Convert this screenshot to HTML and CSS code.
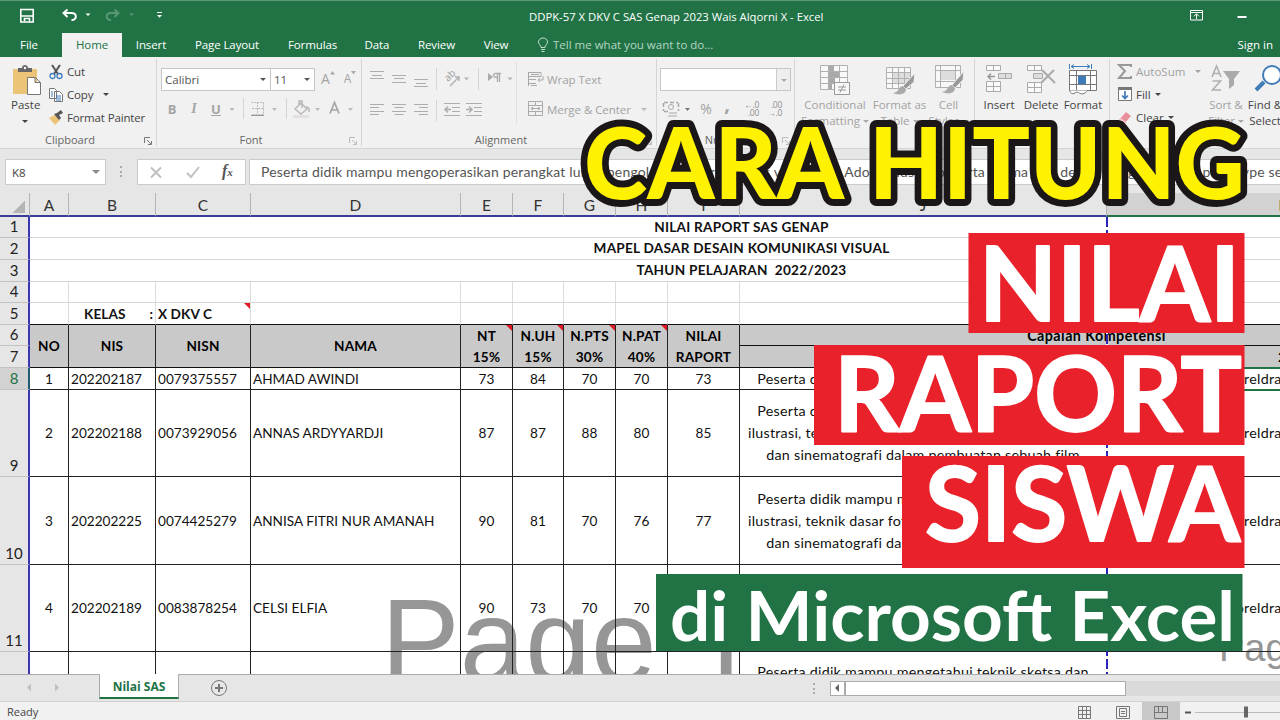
FILE: index.html
```html
<!DOCTYPE html>
<html lang="id">
<head>
    <meta charset="UTF-8">
    <meta name="viewport" content="width=device-width, initial-scale=1.0">
    <title>Cara Hitung Nilai Raport Siswa di Microsoft Excel</title>
    <link rel="stylesheet" href="styles.css">
</head>
<body>
<div class="excel">

    <!-- title bar -->
    <div class="titlebar">
        <svg class="quick" width="180" height="33" fill="none" stroke="#fff">
            <path d="M20.800 8.500h12.400v12.500H20.800z" stroke-width="1.600"/>
            <path d="M21 15h12M24.500 20.500v-3h5v3" stroke-width="1.600"/>
            <path d="M67.500 8.500 63.500 12l4 4M64 12h7.500c6 0 5.500 7 0 7" stroke-width="2"/>
            <path d="M85.500 12.500h5l-2.500 2.500z" fill="#fff" stroke="none"/>
            <g opacity=".25"><path d="m114.500 8.500 4 3.500-4 4M118 12h-7c-6 0-5.500 7 0 7" stroke-width="2"/>
            <path d="M129 12.500h5l-2.500 2.500z" fill="#fff" stroke="none"/></g>
            <path d="M157 11.500h5"/><path d="M157 14h5l-2.500 2.800z" fill="#fff" stroke="none"/>
        </svg>
        <span class="doc-title">DDPK-57 X DKV C SAS Genap 2023 Wais Alqorni X - Excel</span>
        <svg class="window-buttons" width="100" height="33" fill="none" stroke="#fff">
            <path d="M10.500 9.500h12v9.500h-12zM10.500 11.500h12M16.500 18v-5M14 15.300l2.500-2.500 2.500 2.500"/>
            <path d="M57.500 16h9" stroke-width="2"/>
        </svg>
    </div>

    <!-- menu tabs -->
    <div class="tabs">
        <span class="tab file">File</span>
        <span class="tab active">Home</span>
        <span class="tab insert">Insert</span>
        <span class="tab layout">Page Layout</span>
        <span class="tab formulas">Formulas</span>
        <span class="tab data">Data</span>
        <span class="tab review">Review</span>
        <span class="tab view">View</span>
        <svg class="bulb" width="12" height="16" fill="none" stroke="#c2ddcd"><path d="M4 10.500C4 8 1.500 7.500 1.500 5a4.500 4 0 0 1 9 0c0 2.500-2.500 3-2.500 5.500zM4 12.500h4M4.500 14.500h3"/></svg>
        <span class="tell">Tell me what you want to do...</span>
        <span class="signin">Sign in</span>
    </div>

    <!-- ribbon -->
    <div class="ribbon">
        <div class="group clipboard">
            <div class="tools">
                <div class="paste">
                    <svg width="30" height="31"><path d="M1 4h24v25H1z" fill="#ecc477"/><path d="M6 3h4c0-4 6-4 6 0h4v4H6z" fill="#666"/><circle cx="13" cy="3" r="1.200" fill="#fff"/><path d="M15.500 12.500h8l5 5v12h-13zM23 12.500v5h5.500" fill="#fff" stroke="#777"/></svg>
                    <span>Paste</span>
                    <i class="arrow"></i>
                </div>
                <div class="clip-list">
                    <div><svg width="16" height="16" fill="none"><path d="M4 1l6 9M12 1l-6 9" stroke="#555" stroke-width="2"/><circle cx="4.500" cy="12" r="2.500" stroke="#3f7cb8" stroke-width="1.300"/><circle cx="11.500" cy="12" r="2.500" stroke="#3f7cb8" stroke-width="1.300"/></svg><span>Cut</span></div>
                    <div><svg width="16" height="16" fill="#fff" stroke="#777"><path d="M1.500 1.500h5l2 2v8h-7zM6.500 4.500h5l3 3v7h-8z"/><path d="M3 5h2M3 7h2M3 9h2M8 9h5M8 11h5M8 13h5" stroke="#3f7cb8"/></svg><span>Copy</span><i class="arrow"></i></div>
                    <div><svg width="16" height="16"><path d="M1 8l6-3 5 5-5 5z" fill="#ecc477"/><path d="M6 4l5 6 2-2-2-3 4-2-2-3-4 3z" fill="#555"/></svg><span>Format Painter</span></div>
                </div>
            </div>
            <div class="group-name">Clipboard</div>
            <svg class="launch" width="8" height="8" fill="none" stroke="#777"><path d="M.5 6V.5H6M3 3l4 4M7.500 4v3.500H4"/></svg>
        </div>

        <div class="group font">
            <div class="font-row">
                <div class="select name">Calibri<i class="arrow"></i></div>
                <div class="select size">11<i class="arrow"></i></div>
                <span class="grow">A<svg width="5" height="4"><path d="M0 3.500 2.500 0 5 3.500z" fill="#aaa"/></svg></span>
                <span class="shrink">A<svg width="5" height="4"><path d="M0 0h5L2.500 3.500z" fill="#aaa"/></svg></span>
            </div>
            <div class="style-row">
                <b>B</b><em>I</em><u>U</u>
                <svg width="130" height="22" fill="none" stroke="#b9b9b9">
                    <path d="M3.500 10h5L6 13z" fill="#b9b9b9" stroke="none"/>
                    <path d="M17.500 0v21M60.500 0v21" stroke="#d4d4d4"/>
                    <path d="M25.500 4.500h12v12h-12M31.500 4v12M26 10.500h12" stroke-dasharray="2 1"/><path d="M25 17.500h13" stroke="#999"/>
                    <path d="M46 10h5l-2.500 3zM89 10h5l-2.500 3zM122 10h5l-2.500 3z" fill="#b9b9b9" stroke="none"/>
                    <path d="m69 11 6-6 6 6-6 5zM73 7V3h3v7M80 9c4 0 3 3 3 5" stroke-width="1.500"/>
                    <path d="M67 17h16v3H67z" fill="#e3dfe3" stroke="none"/>
                    <path d="m104 15.500 4.500-11 4.500 11M105.500 12h6" stroke="#a5a5a5" stroke-width="1.700"/>
                </svg>
            </div>
            <div class="group-name">Font</div>
            <svg class="launch" width="8" height="8" fill="none" stroke="#bbb"><path d="M.5 6V.5H6M3 3l4 4M7.500 4v3.500H4"/></svg>
        </div>

        <div class="group alignment">
            <div class="tools">
                <svg class="align-icons" width="154" height="68" fill="none" stroke="#adadad">
                    <path d="M8 12.500h14M10 16.500h10M8 19.500h14M30 16.500h14M32 19.500h10M30 23.500h14M52 20.500h14M54 24.500h10M52 27.500h14"/>
                    <path d="M8 45.500h14M8 48.500h9M8 52.500h14M8 55.500h9M30 45.500h14M32.500 48.500h9M30 52.500h14M32.500 55.500h9M52 45.500h14M57 48.500h9M52 52.500h14M57 55.500h9"/>
                    <path d="M74.500 9v22M116.500 9v22M74.500 41v21" stroke="#d5d5d5"/>
                    <text transform="translate(86 23) rotate(-45)" class="ab">ab</text>
                    <path d="m88 27 9-9M93 18h4v4" stroke-width="1.400"/>
                    <path d="M102 18.500h5l-2.500 3zM145.500 18.500h5l-2.500 3z" fill="#b5b5b5" stroke="none"/>
                    <path d="m126 14 5 4-5 4z" fill="#aaa" stroke="none"/><path d="M135.500 23v-8.500M137.500 23v-8.500M139 14.500h-5c-4 0-3 4 1 4" stroke-width="1.300"/>
                    <path d="M82 44.500h16M90 48.500h8M90 52.500h8M82 56.500h16M104 44.500h16M112 48.500h8M112 52.500h8M104 56.500h16"/>
                    <path d="M89 50.500h-6M86 47.500l-3 3 3 3M104 50.500h6M107 47.500l3 3-3 3" stroke-width="1.500"/>
                </svg>
                <div class="wrap-list">
                    <div><svg width="16" height="16" fill="none" stroke="#aaa"><path d="M.5 1v14M1 1.500h12v4H1M3 3.500h8M1 8.500h7M1 12.500h7M3 14.500h6M15 5v4h-5M12 7l-2 2 2 2"/></svg><span>Wrap Text</span></div>
                    <div><svg width="16" height="16" fill="none" stroke="#aaa"><path d="M.5.5h14v14H.5zM.5 4.500h14M.5 10.500h14M7.500.500v4M7.500 10.500v4M3 7.500h9M5 6 3 7.500 5 9M10 6l2 1.500L10 9"/></svg><span>Merge &amp; Center</span><i class="arrow"></i></div>
                </div>
            </div>
            <div class="group-name">Alignment</div>
            <svg class="launch" width="8" height="8" fill="none" stroke="#bbb"><path d="M.5 6V.5H6M3 3l4 4M7.500 4v3.500H4"/></svg>
        </div>

        <div class="group number">
            <div class="select format"><span><i class="arrow"></i></span></div>
            <div class="number-row">
                <svg width="34" height="22" fill="none" stroke="#aaa"><path d="M4 4.500h14M4 13.500h5M3.500 5v8M18.500 5v8" stroke-dasharray="4 2" stroke-width="1.600"/><circle cx="11" cy="9" r="2.500"/><path d="M9 15h8M8 18h9" stroke="#ccc" stroke-width="2"/><path d="M25 10h5l-2.500 3z" fill="#777" stroke="none"/></svg>
                <span class="percent">%</span><span class="comma">,</span>
                <span class="decimal">←.0<br>.00</span><span class="decimal">.00<br>→.0</span>
            </div>
            <div class="group-name">Number</div>
            <svg class="launch" width="8" height="8" fill="none" stroke="#bbb"><path d="M.5 6V.5H6M3 3l4 4M7.500 4v3.500H4"/></svg>
        </div>

        <div class="group styles">
            <div class="big cond">
                <svg width="32" height="32" fill="#f8f8f8" stroke="#b0b0b0"><path d="M1.500 1.500h27v24h-27zM1.500 7.500h27M1.500 13.500h27M1.500 19.500h27M9.500 1.500v24M20.500 1.500v24"/><path d="M10 2h5v5h-5zM10 8h10v5H10zM10 14h6v5h-6zM10 20h3v5h-3z" fill="#a9a9a9" stroke="none"/><path d="M15.500 18.500h15v12h-15zM19 23h8M19 26h8M25 20.500l-4 8" stroke="#999"/></svg>
                <span>Conditional<br>Formatting <i class="arrow"></i></span>
            </div>
            <div class="big table">
                <svg width="32" height="32" fill="#f8f8f8" stroke="#b0b0b0"><path d="M2.500 3.500h24v21h-24z"/><path d="M8 9h18v10H8z" fill="#ddd" stroke="none"/><path d="M2.500 8.500h24M2.500 14.500h24M2.500 19.500h24M8.500 3.500v21M14.500 3.500v21M20.500 3.500v21"/><path d="m31 9-1 9-8 7-3-3z" fill="#999" stroke="#f1f1f1"/><path d="M19 22c-5 0-3 6-10 7 7 3 13 1 13-4z" fill="#aaa" stroke="none"/></svg>
                <span>Format as<br>Table <i class="arrow"></i></span>
            </div>
            <div class="big cell">
                <svg width="32" height="32" fill="#f8f8f8" stroke="#b0b0b0"><path d="M2.500 1.500h25v22h-25z"/><path d="M8 7h14v9H8z" fill="#ddd" stroke="none"/><path d="M2.500 6.500h25M2.500 17.500h25M7.500 1.500v22M22.500 1.500v22"/><path d="m31 7-1 9-8 8-3-3z" fill="#999" stroke="#f1f1f1"/><path d="M19 21c-5 0-3 6-10 7 7 3 13 1 13-4z" fill="#aaa" stroke="none"/></svg>
                <span>Cell<br>Styles <i class="arrow"></i></span>
            </div>
        </div>

        <div class="group cells">
            <div class="big dark">
                <svg width="30" height="32" fill="#fafafa" stroke="#aaa"><path d="M2.500 1.500h14v5h-14zM9.500 1.500v5M2.500 17.500h14v10h-14zM2.500 22.500h14M9.500 17.500v10"/><path d="M14.500 9.500h13v5h-13zM21.500 9.500v5" fill="#ddd"/><path d="M11 12.500H4M7 9.500l-3 3 3 3" fill="none" stroke="#999" stroke-width="1.500"/></svg>
                <span>Insert<br><i class="arrow"></i></span>
            </div>
            <div class="big dark">
                <svg width="30" height="32" fill="#fafafa" stroke="#aaa"><path d="M1.500 1.500h14v5h-14zM8.500 1.500v5M1.500 18.500h14v10h-14zM1.500 23.500h14M8.500 18.500v10"/><path d="M7.500 9.500h9v5h-9z" fill="#ddd"/><path d="m16 6 13 13M28 6 15 19" fill="none" stroke-width="2"/></svg>
                <span>Delete<br><i class="arrow"></i></span>
            </div>
            <div class="big dark">
                <svg width="30" height="32" fill="#fff" stroke="#777"><path d="M1.500 6.500h27v20h-27zM1.500 11.500h27M1.500 20.500h27M8.500 6.500v20M22.500 6.500v20"/><path d="M10 12h8v8h-8z" fill="#3f7cb8" stroke="none"/><path d="M1.500 26.500c3 7 6 0 9 2s6 2 9-2"/><path d="M1.500 0v5M23.500 0v5M4 2.500h17M6 .5l-3 2 3 2M19 .5l3 2-3 2" stroke="#3f7cb8" fill="none"/></svg>
                <span>Format<br><i class="arrow"></i></span>
            </div>
        </div>

        <div class="group editing">
            <div class="edit-list">
                <div class="dim"><svg width="18" height="17" fill="none" stroke="#999" stroke-width="2"><path d="M15 4V2H3l6 6-6 7h12v-2"/></svg><span class="autosum">AutoSum</span><i class="arrow"></i></div>
                <div><svg width="18" height="17" fill="#fff" stroke="#777"><path d="M2.500 1.500h13v13h-13z"/><path d="M2 1h14v3H2z" fill="#777" stroke="none"/><path d="M9 5v7M6 9.500l3 3 3-3" fill="none" stroke="#3f7cb8" stroke-width="1.700"/></svg><span>Fill</span><i class="arrow"></i></div>
                <div><svg width="18" height="17"><path d="m2 12 8-9 5 4-7 8H4z" fill="#e8909c"/><path d="m2 12 3-3 5 4-2 2H4z" fill="#f5c5cc"/></svg><span>Clear</span><i class="arrow"></i></div>
            </div>
            <div class="big sort">
                <svg width="32" height="32" fill="none" stroke="#b0b0b0" stroke-width="1.600"><path d="m2 13 4.500-11L11 13M3.500 9.500h6M2.500 17h8l-8 9h8.500"/><path d="M13 7h17l-6 8v6l-5 4V15z" fill="#aaa" stroke="none"/></svg>
                <span>Sort &amp;<br>Filter <i class="arrow"></i></span>
            </div>
            <div class="big find dark">
                <svg width="32" height="32" fill="#fff" stroke="#3f7cb8"><path d="M11 18 3 26" stroke-width="4"/><circle cx="19" cy="11" r="9" stroke-width="2"/></svg>
                <span>Find &amp;<br>Select</span>
            </div>
            <div class="group-name">Editing</div>
        </div>
    </div>

    <!-- formula bar -->
    <div class="formula-bar">
        <div class="name-box">K8<i class="arrow"></i></div>
        <div class="dots"></div>
        <div class="fx-box">
            <svg width="107" height="24" fill="none" stroke="#c0c0c0" stroke-width="2"><path d="m13 7.500 10 10M23 7.500l-10 10M49 13l4 4 8-10"/></svg>
            <span class="fx">f<small>x</small></span>
        </div>
        <div class="formula">Peserta didik mampu mengoperasikan perangkat lunak pengolah gambar berbasis vektor dan Adobe Illustrator serta skema tata desain dengan produk prototype sebuah karya</div>
    </div>

    <!-- worksheet -->
    <div class="sheet">
        <span class="watermark page1">Page <span>1</span></span>
        <span class="watermark page2">Page 2</span>
        <div class="grid">
            <div class="head corner"></div>
            <div class="head">A</div><div class="head">B</div><div class="head">C</div><div class="head">D</div>
            <div class="head">E</div><div class="head">F</div><div class="head">G</div><div class="head">H</div>
            <div class="head">I</div><div class="head">J</div><div class="head selected">K</div>

            <div class="num">1</div><div class="title">NILAI RAPORT SAS GENAP</div>
            <div class="num">2</div><div class="title">MAPEL DASAR DESAIN KOMUNIKASI VISUAL</div>
            <div class="num">3</div><div class="title">TAHUN PELAJARAN &nbsp;2022/2023</div>

            <div class="num">4</div><div></div><div></div><div></div><div></div><div></div><div></div><div></div><div></div><div></div><div></div><div></div>

            <div class="num">5</div><div class="above"></div><div class="above kelas"><span>KELAS</span><span>:</span></div>
            <div class="above kode note">X DKV C</div><div class="above"></div><div class="above"></div><div class="above"></div>
            <div class="above"></div><div class="above"></div><div class="above"></div><div class="above"></div><div class="above"></div>

            <div class="num row6">6</div><div class="num row7">7</div>
            <div class="th">NO</div><div class="th">NIS</div><div class="th">NISN</div><div class="th">NAMA</div>
            <div class="th note">NT<br>15%</div><div class="th note">N.UH<br>15%</div><div class="th note">N.PTS<br>30%</div><div class="th note">N.PAT<br>40%</div>
            <div class="th">NILAI<br>RAPORT</div>
            <div class="th capaian">Capaian Kompetensi</div>
            <div class="th kd1">1</div><div class="th kd2">2</div>

            <div class="num current">8</div><div class="td">1</div><div class="td left">202202187</div><div class="td left">0079375557</div><div class="td left">AHMAD AWINDI</div>
            <div class="td">73</div><div class="td">84</div><div class="td">70</div><div class="td">70</div><div class="td">73</div>
            <div class="td desc">Peserta didik mampu mengetahui teknik sketsa dan</div><div class="td desc corel picked">mampu mengoperasikan Coreldraw</div>

            <div class="num">9</div><div class="td">2</div><div class="td left">202202188</div><div class="td left">0073929056</div><div class="td left">ANNAS ARDYYARDJI</div>
            <div class="td">87</div><div class="td">87</div><div class="td">88</div><div class="td">80</div><div class="td">85</div>
            <div class="td desc">Peserta didik mampu mengetahui teknik sketsa dan<br>ilustrasi, teknik dasar fotografi, teknik dasar videografi<br>dan sinematografi dalam pembuatan sebuah film</div><div class="td desc corel">mampu mengoperasikan Coreldraw</div>

            <div class="num">10</div><div class="td">3</div><div class="td left">202202225</div><div class="td left">0074425279</div><div class="td left">ANNISA FITRI NUR AMANAH</div>
            <div class="td">90</div><div class="td">81</div><div class="td">70</div><div class="td">76</div><div class="td">77</div>
            <div class="td desc">Peserta didik mampu mengetahui teknik sketsa dan<br>ilustrasi, teknik dasar fotografi, teknik dasar videografi<br>dan sinematografi dalam pembuatan sebuah film</div><div class="td desc corel">mampu mengoperasikan Coreldraw</div>

            <div class="num">11</div><div class="td">4</div><div class="td left">202202189</div><div class="td left">0083878254</div><div class="td left">CELSI ELFIA</div>
            <div class="td">90</div><div class="td">73</div><div class="td">70</div><div class="td">70</div><div class="td"></div>
            <div class="td"></div><div class="td desc corel">mampu mengoperasikan Coreldraw</div>

            <div class="num last"></div><div class="td"></div><div class="td"></div><div class="td"></div><div class="td"></div><div class="td"></div><div class="td"></div>
            <div class="td"></div><div class="td"></div><div class="td"></div><div class="td desc cut">Peserta didik mampu mengetahui teknik sketsa dan</div><div class="td"></div>
        </div>
        <div class="page-break"></div>
    </div>

    <!-- sheet tabs and scroll bar -->
    <div class="sheet-tabs">
        <svg width="99" height="27" fill="#bfbfbf"><path d="M31 8.500v8L27 12.500zM55 8.500v8l4-4z"/></svg>
        <div class="sheet-tab">Nilai SAS</div>
        <svg class="add" width="18" height="18" fill="none" stroke="#777"><circle cx="9" cy="9" r="7.500"/><path d="M5 9h8M9 5v8" stroke-width="2"/></svg>
        <div class="dots"></div>
        <div class="scrollbar">
            <div class="scroll-left"><svg width="12" height="12"><path d="M8 2v8L4 6z" fill="#666"/></svg></div>
            <div class="thumb"></div>
        </div>
    </div>

    <!-- status bar -->
    <div class="status">
        <span>Ready</span>
        <svg width="210" height="18" fill="none" stroke="#777">
            <path d="M72 0h38v18H72z" fill="#c9c9c9" stroke="none"/>
            <path d="M8.500 4.500h12v12h-12zM8.500 8.500h12M8.500 12.500h12M12.500 4.500v12M16.500 4.500v12"/>
            <path d="M46.500 4.500h13v12h-13zM49.500 6.500h7v8h-7zM51 9.500h4M51 11.500h4"/>
            <path d="M84.500 4.500h13v12h-13zM88.500 4.500v6M92.500 4.500v6h-8M97 10.500h-4.500"/>
            <path d="M115 10.500h6" stroke="#555" stroke-width="2"/>
            <path d="M125 10.500h85" stroke="#bbb"/><path d="M174 4.500h4v11h-4z" fill="#666" stroke="none"/>
        </svg>
    </div>

    <!-- headline -->
    <svg class="headline" width="1280" height="720">
        <g class="yellow">
            <text x="584" y="198.500" textLength="260" lengthAdjust="spacingAndGlyphs">CARA</text>
            <text x="869" y="198.500" textLength="376" lengthAdjust="spacingAndGlyphs">HITUNG</text>
        </g>
        <g class="red">
            <rect x="968.500" y="233" width="276" height="100"/>
            <rect x="814" y="345" width="430.500" height="100"/>
            <rect x="902" y="456" width="342.500" height="112"/>
        </g>
        <g class="white">
            <text x="979" y="320.500" textLength="261" lengthAdjust="spacingAndGlyphs">NILAI</text>
            <text x="834" y="431" textLength="408" lengthAdjust="spacingAndGlyphs">RAPORT</text>
            <text x="925" y="541" textLength="315" lengthAdjust="spacingAndGlyphs">SISWA</text>
        </g>
        <rect class="green" x="656" y="574" width="586.500" height="77"/>
        <text class="excel-text" x="670" y="641" textLength="565" lengthAdjust="spacingAndGlyphs">di Microsoft Excel</text>
    </svg>
</div>
</body>
</html>
```
FILE: styles.css
```css
* {
    box-sizing: border-box;
}

body {
    margin: 0;
    background: #e6e6e6;
    font-family: "Open Sans", "Noto Sans", sans-serif;
    font-size: 11.5px;
    color: #444;
}

svg {
    display: block;
    flex: none;
}

.excel {
    position: relative;
    width: 1280px;
    height: 720px;
    overflow: hidden;
    display: flex;
    flex-direction: column;
}

.arrow {
    display: inline-block;
    flex: none;
    width: 6px;
    height: 3px;
    border: 3px solid transparent;
    border-top-color: currentColor;
    border-bottom: none;
}

/* title bar and tabs */
.titlebar {
    height: 33px;
    flex: none;
    display: flex;
    background: #217346;
    border-top: 1px solid #5b9c78;
    color: #fff;
}

.doc-title {
    line-height: 31px;
    font-size: 11.3px;
    margin-left: 349px;
    white-space: nowrap;
}

.window-buttons {
    margin-left: auto;
}

.tabs {
    height: 24px;
    flex: none;
    display: flex;
    background: #217346;
    color: #fff;
    line-height: 23px;
    white-space: nowrap;
}

.tab {
    text-align: center;
    flex: none;
    letter-spacing: -.1px;
}

.file { width: 58px; margin-right: 4px; }
.active { width: 60px; background: #f1f1f1; color: #217346; }
.insert { width: 58px; }
.layout { width: 94px; }
.formulas { width: 77px; }
.data { width: 52px; }
.review { width: 67px; }
.view { width: 52px; }
.bulb { margin: 4px 4px 0 15px; }
.tell { color: #b5d5c3; }
.signin { margin-left: auto; margin-right: 7px; }

/* ribbon */
.ribbon {
    height: 92px;
    flex: none;
    display: flex;
    background: #f1f1f1;
    border-bottom: 1px solid #d4d4d4;
    white-space: nowrap;
}

.group {
    position: relative;
    flex: none;
    height: 87px;
    margin-top: 2px;
    border-right: 1px solid #d5d5d5;
}

.group-name {
    position: absolute;
    bottom: -2px;
    width: 100%;
    text-align: center;
    font-size: 11px;
    color: #666;
    line-height: 16px;
}

.launch {
    position: absolute;
    right: 4px;
    bottom: 1px;
}

.tools {
    display: flex;
}

.clipboard { width: 157px; }
.clipboard .group-name { width: 140px; }
.font { width: 205px; padding-left: 4px; color: #a5a5a5; }
.font .group-name { width: 180px; }
.alignment { width: 295px; color: #a2a2a2; }
.alignment .group-name { width: 278px; }
.number { width: 138px; padding-left: 3px; color: #a2a2a2; }
.number .group-name { width: 132px; }
.styles { width: 180px; display: flex; color: #a2a2a2; }
.cells { width: 135px; display: flex; padding-left: 3px; }
.editing { width: 180px; display: flex; padding-left: 6px; border: none; }

.paste {
    width: 48px;
    padding: 6px 0 0 12px;
    display: flex;
    flex-direction: column;
    align-items: flex-start;
}

.paste span {
    margin-left: -1px;
    line-height: 18px;
}

.paste .arrow {
    margin: 6px 0 0 10px;
}

.clip-list {
    padding-top: 1px;
    letter-spacing: -.15px;
}

.clip-list div {
    height: 23px;
    display: flex;
    align-items: center;
    gap: 3px;
}

.clip-list .arrow {
    margin-left: 7px;
}

.font-row {
    display: flex;
    padding-top: 9px;
}

.select {
    height: 23px;
    background: #fff;
    border: 1px solid #c6c6c6;
    display: flex;
    align-items: center;
    justify-content: space-between;
    padding: 0 4px 0 3px;
    color: #555;
}

.name { width: 110px; }
.size { width: 44px; border-left: none; }

.grow, .shrink {
    display: flex;
    margin-left: 6px;
    font-size: 14px;
    line-height: 22px;
}

.shrink {
    margin-left: 9px;
    font-size: 12px;
}

.grow svg, .shrink svg {
    margin-top: 3px;
}

.style-row {
    display: flex;
    margin-top: 7px;
    font-size: 13px;
    line-height: 22px;
    text-align: center;
}

.style-row b, .style-row em, .style-row u {
    width: 22px;
    flex: none;
    font-weight: bold;
}

.style-row em {
    font-family: "Liberation Serif", serif;
    font-size: 14px;
}

.style-row svg {
    margin-left: -1px;
}

.ab {
    font-size: 10px;
    fill: #999;
    stroke: none;
}

.wrap-list {
    height: 62px;
    margin-top: 3px;
    padding: 6px 0 0 11px;
    border-left: 1px solid #e0e0e0;
}

.wrap-list div {
    display: flex;
    align-items: center;
    gap: 3px;
    height: 22px;
    margin-bottom: 8px;
    letter-spacing: -.05px;
}

.wrap-list .arrow {
    margin-left: 7px;
    border-top-color: #bbb;
}

.format {
    width: 131px;
    margin-top: 9px;
    padding: 0;
    justify-content: flex-end;
    color: #aaa;
}

.format span {
    width: 14px;
    height: 21px;
    padding: 9px 0 0 4px;
    background: #eee;
    border-left: 1px solid #ccc;
    line-height: 0;
}

.number-row {
    display: flex;
    margin-top: 7px;
    line-height: 22px;
}

.percent { font-size: 14px; width: 24px; text-align: center; }
.comma { font-size: 20px; font-weight: bold; line-height: 12px; width: 18px; text-align: center; }
.decimal { font-size: 8.5px; line-height: 8px; margin: 3px 0 0 8px; width: 15px; text-align: right; letter-spacing: -.3px; color: #8f8f8f; }

.big {
    display: flex;
    flex-direction: column;
    align-items: center;
    text-align: center;
    line-height: 16px;
    padding-top: 5px;
    flex: none;
}

.big span {
    margin-top: 1px;
}

.big .arrow {
    vertical-align: middle;
    border-top-color: #aaa;
}

.dark { color: #444; }
.cells .big { width: 42px; }
.cond { width: 80px; }
.table { width: 49px; }
.cell { width: 49px; }

.edit-list {
    padding-top: 1px;
}

.edit-list div {
    display: flex;
    align-items: center;
    height: 23px;
    width: 94px;
}

.edit-list span {
    margin: 0 4px 0 2px;
}

.edit-list .autosum {
    margin-right: 10px;
}

.dim { color: #a2a2a2; }
.sort { width: 32px; color: #a2a2a2; }
.find { width: 56px; margin-left: -5px; }
.find svg { margin-left: 7px; }
.editing .group-name { left: 5px; width: 200px; }

/* formula bar */
.formula-bar {
    height: 44px;
    flex: none;
    display: flex;
    padding: 10px 0 0 5px;
    background: #e6e6e6;
}

.name-box, .fx-box, .formula {
    height: 26px;
    flex: none;
    background: #fff;
    border: 1px solid #cbcbcb;
}

.name-box {
    width: 101px;
    display: flex;
    align-items: center;
    justify-content: space-between;
    padding: 0 5px 0 6px;
}

.name-box .arrow {
    width: 8px;
    height: 4px;
    border-width: 4px;
    border-bottom: none;
    border-top-color: #888;
}

.dots {
    width: 2px;
    height: 11px;
    flex: none;
    background: repeating-linear-gradient(#aaa 0 2px, transparent 2px 4.5px);
}

.formula-bar .dots {
    margin: 7px 14px;
}

.fx-box {
    width: 109px;
    margin-left: 1px;
    position: relative;
}

.fx {
    position: absolute;
    left: 84px;
    top: 2px;
    font: italic bold 16px "Liberation Serif", serif;
    color: #555;
}

.fx small {
    font-size: 11px;
}

.formula {
    width: 1032px;
    margin-left: 3px;
    padding-left: 11px;
    line-height: 24px;
    white-space: nowrap;
    overflow: hidden;
    font-family: Lato, sans-serif;
    font-size: 14px;
    letter-spacing: .17px;
    color: #555;
}

/* worksheet */
.sheet {
    position: relative;
    height: 481px;
    flex: none;
    overflow: hidden;
    background: #fff;
    font-family: Lato, sans-serif;
    font-size: 13.6px;
    color: #111;
}

.grid {
    position: relative;
    width: 1467px;
    display: grid;
    grid-template-columns: 30px 39px 87px 95px 210px 52px 51px 52px 52px 72px 367px 360px;
    grid-template-rows: 24px 21px 22px 22px 21px 22px 21px 22px 22px 87px 88px 87px 24px;
}

.grid > div {
    border-right: 1px solid #dcdcdc;
    border-bottom: 1px solid #d6d6d6;
    white-space: nowrap;
}

.grid > .head {
    background: #e6e6e6;
    border-right: 1px solid #b5b5b5;
    border-bottom: 2px solid #3b3b9b;
    text-align: center;
    font-size: 15.5px;
    line-height: 25px;
    color: #333;
}

.grid > .selected {
    background: #d2d2d2;
    border-bottom-color: #217346;
    padding-right: 6px;
    color: #217346;
}

.grid > .corner {
    background: linear-gradient(135deg, transparent 50%, #b5b5b5 50%) 12px 7px / 13px 13px no-repeat, #e6e6e6;
}

.grid > .num {
    background: #e6e6e6;
    border-right: 2px solid #3a36b0;
    border-bottom: 1px solid #c2c2c2;
    display: flex;
    align-items: flex-end;
    justify-content: center;
    font-size: 15px;
    line-height: 21px;
    color: #222;
}

.grid > .current {
    background: #d2d2d2;
    color: #217346;
    border-right-color: #1d5c70;
}

.grid > .title {
    grid-column: 2 / 13;
    padding-right: 13px;
    font-weight: bold;
    line-height: 21px;
    letter-spacing: .25px;
    text-align: center;
}

.grid > .above {
    border-bottom: 1px solid #111;
    font-weight: bold;
    line-height: 22px;
    letter-spacing: .1px;
}

.grid > .kelas {
    display: flex;
    justify-content: space-between;
    padding: 0 2px 0 15px;
}

.grid > .kode {
    padding-left: 2px;
}

.note {
    position: relative;
}

.note::after {
    content: "";
    position: absolute;
    top: 0;
    right: 0;
    border: 3px solid #e01b24;
    border-left-color: transparent;
    border-bottom-color: transparent;
}

.row6 { grid-row: 7; grid-column: 1; }
.row7 { grid-row: 8; grid-column: 1; }

.grid > .th {
    grid-row: 7 / 9;
    background: #c9c9c9;
    border-right: 1px solid #222;
    border-bottom: 1px solid #111;
    padding-top: 2px;
    display: flex;
    align-items: center;
    justify-content: center;
    text-align: center;
    font-weight: bold;
    line-height: 21.5px;
    letter-spacing: .2px;
    color: #000;
}

.grid > .capaian {
    grid-row: 7;
    grid-column: 11 / 13;
    padding-right: 13px;
    font-size: 14.3px;
    letter-spacing: .45px;
}

.grid > .kd1 { grid-row: 8; grid-column: 11; }
.grid > .kd2 { grid-row: 8; grid-column: 12; padding-right: 9px; }

.grid > .td {
    border-right: 1px solid #222;
    border-bottom: 1px solid #222;
    display: flex;
    align-items: center;
    justify-content: center;
    text-align: center;
    line-height: 22px;
}

.grid > .left {
    justify-content: flex-start;
    padding-left: 2px;
}

.grid > .desc {
    font-size: 14.3px;
    letter-spacing: .24px;
}

.grid > .corel {
    justify-content: flex-end;
    padding-right: 173px;
}

.grid > .picked {
    outline: 2px solid #217346;
    outline-offset: -1px;
}

.grid > .cut {
    padding-top: 16px;
}

.watermark {
    position: absolute;
    font-family: "Liberation Sans", Arial, sans-serif;
    color: #969696;
    white-space: nowrap;
    line-height: 1;
}

.page1 {
    left: 381px;
    top: 389px;
    font-size: 118px;
}

.page1 span {
    font-family: Roboto, sans-serif;
    line-height: 0;
}

.page2 {
    left: 1219px;
    top: 436px;
    font-size: 38px;
}

.page-break {
    position: absolute;
    left: 1106px;
    top: 24px;
    width: 2px;
    height: 460px;
    background: repeating-linear-gradient(#2a24b8 0 10px, #fff 10px 13px);
}

/* bottom bars */
.sheet-tabs {
    height: 28px;
    flex: none;
    display: flex;
    background: #e6e6e6;
    border-top: 1px solid #ababab;
    border-bottom: 1px solid #d0d0d0;
}

.sheet-tab {
    width: 80px;
    height: 25px;
    flex: none;
    margin-top: -1px;
    background: #fff;
    border: 1px solid #ababab;
    border-top: none;
    border-bottom: 2px solid #217346;
    color: #217346;
    font-weight: bold;
    font-size: 12px;
    line-height: 25px;
    text-align: center;
}

.add {
    margin: 4px 0 0 31px;
}

.sheet-tabs .dots {
    margin: 8px 0 0 585px;
}

.scrollbar {
    margin: 6px 0 0 15px;
    width: 450px;
    height: 15px;
    flex: none;
    display: flex;
    background: #dadada;
}

.scroll-left {
    width: 15px;
    background: #fff;
    border: 1px solid #ababab;
}

.thumb {
    width: 281px;
    background: #fff;
    border: 1px solid #ababab;
}

.status {
    height: 18px;
    flex: none;
    display: flex;
    justify-content: space-between;
    background: #f1f1f1;
    padding-left: 7px;
    line-height: 20px;
    font-size: 11px;
}

/* headline */
.headline {
    position: absolute;
    left: 0;
    top: 0;
    font-family: Lato, "Open Sans", sans-serif;
    font-weight: bold;
}

.yellow text {
    font-size: 100px;
    font-weight: 900;
    fill: #fff200;
    stroke: #1b1718;
    stroke-width: 14px;
    stroke-linejoin: round;
    paint-order: stroke;
}

.red {
    fill: #e8212a;
}

.white text {
    font-size: 103px;
    fill: #fff;
    stroke: #fff;
    stroke-width: 2px;
    stroke-linejoin: round;
}

.green {
    fill: #217346;
}

.excel-text {
    font-size: 68px;
    fill: #fff;
}
```
